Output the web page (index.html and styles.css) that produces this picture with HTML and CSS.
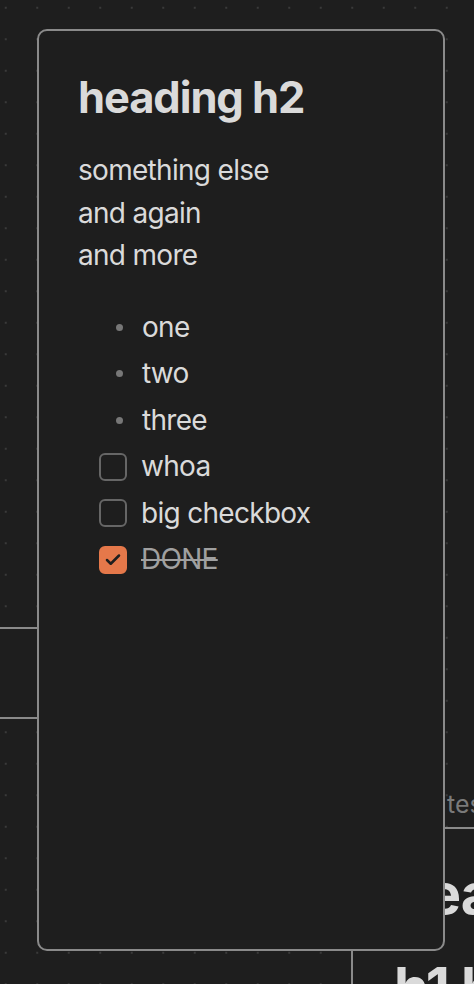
FILE: index.html
```html
<!DOCTYPE html>
<html lang="en">
<head>
    <meta charset="UTF-8">
    <meta name="viewport" content="width=device-width, initial-scale=1.0">
    <title>Canvas</title>
    <link rel="stylesheet" href="styles.css">
</head>
<body>
    <div class="canvas">
        <div class="node node-left"></div>

        <div class="node node-right">
            <div class="node-label">test</div>
            <div class="node-content">
                <h1>heading h1</h1>
                <h1>h1 heading</h1>
            </div>
        </div>

        <div class="node node-main">
            <div class="node-content">
                <h2>heading h2</h2>
                <p>something else<br>and again<br>and more</p>
                <ul class="list">
                    <li class="bullet">one</li>
                    <li class="bullet">two</li>
                    <li class="bullet">three</li>
                    <li class="task"><span class="box"></span>whoa</li>
                    <li class="task"><span class="box"></span>big checkbox</li>
                    <li class="task done">
                        <span class="box checked">
                            <svg viewBox="0 0 24 24" width="18" height="18"><path d="M20 6 9 17l-5-5" fill="none" stroke="#1e1e1e" stroke-width="3.4" stroke-linecap="round" stroke-linejoin="round"/></svg>
                        </span>DONE
                    </li>
                </ul>
            </div>
        </div>
    </div>
</body>
</html>
```

FILE: styles.css
```css
body {
    margin: 0;
    font-family: Inter, "Noto Sans", sans-serif;
    background-color: #1e1e1e;
    overflow: hidden;
}
.canvas {
    position: relative;
    width: 474px;
    height: 984px;
    overflow: hidden;
    background-image: radial-gradient(circle, #3a3a3a 1px, transparent 1.3px);
    background-size: 31.5px 31.5px;
    background-position: -10px -8px;
}
.node {
    position: absolute;
    box-sizing: border-box;
    border: 2px solid #8a8a8a;
    border-radius: 10px;
    background-color: #1e1e1e;
    color: #dadada;
}
.node-left {
    left: -200px;
    top: 627px;
    width: 420px;
    height: 92px;
}
.node-right {
    left: 351px;
    top: 827px;
    width: 420px;
    height: 400px;
}
.node-main {
    left: 37px;
    top: 29px;
    width: 408px;
    height: 922px;
    z-index: 2;
}
.node-label {
    position: absolute;
    top: -40px;
    left: 94px;
    font-size: 25px;
    color: #7a7a7a;
}
.node-right .node-content {
    padding: 31px 0 0 41px;
}
.node-right h1 {
    margin: 0 0 26px;
    font-size: 56px;
    line-height: 68px;
    font-weight: 700;
    letter-spacing: -1px;
    white-space: nowrap;
}
.node-main .node-content {
    padding: 39px 0 0 39px;
}
h2 {
    margin: 0;
    font-size: 43.5px;
    line-height: 54px;
    font-weight: 700;
    letter-spacing: -1.1px;
}
p {
    margin: 25px 0 0;
    font-size: 28px;
    line-height: 42.5px;
    letter-spacing: -0.7px;
}
.list {
    list-style: none;
    margin: 27px 0 0;
    padding: 0;
    font-size: 28px;
    line-height: 46.6px;
    letter-spacing: -0.7px;
}
.list li {
    display: flex;
    align-items: center;
}
.bullet {
    padding-left: 64px;
    position: relative;
}
.bullet::before {
    content: "";
    position: absolute;
    left: 38px;
    top: 20px;
    width: 7px;
    height: 7px;
    border-radius: 50%;
    background-color: #777;
}
.task {
    padding-left: 21px;
}
.box {
    box-sizing: border-box;
    width: 28px;
    height: 28px;
    margin-right: 14px;
    border: 2px solid #666;
    border-radius: 6px;
    display: flex;
    align-items: center;
    justify-content: center;
}
.box.checked {
    background-color: #e5784a;
    border-color: #e5784a;
}
.done {
    color: #a0a0a0;
    text-decoration: line-through;
}
```
